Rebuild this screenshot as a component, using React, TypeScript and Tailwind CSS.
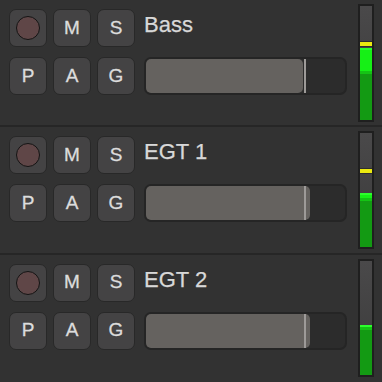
import React from "react";

type Track = {
  name: string;
  fill: number;
  peak: number | null;
  level: number;
};

const tracks: Track[] = [
  { name: "Bass", fill: 157, peak: 36, level: 42 },
  { name: "EGT 1", fill: 164, peak: 36, level: 60 },
  { name: "EGT 2", fill: 164, peak: null, level: 64 },
];

const font = { fontFamily: '"Liberation Sans", Arial, Helvetica, sans-serif' };

function Btn({ children }: { children: React.ReactNode }) {
  return (
    <div className="w-[38px] h-[38px] rounded-[7px] bg-[#444344] border border-[#282828] flex items-center justify-center text-[19px] text-[#dcdcdc] [-webkit-text-stroke:0.3px_#dcdcdc]">
      {children}
    </div>
  );
}

function Meter({ peak, level }: { peak: number | null; level: number }) {
  const threshold = 65;
  const innerH = 114;
  const brightH = Math.max(0, threshold - level);
  return (
    <div className="mt-[4px] w-[16px] h-[118px] border-2 border-[#1f1f1f] bg-gradient-to-b from-[#4a494a] to-[#3a3a3a] relative">
      {peak !== null && (
        <div
          className="absolute left-0 right-0 h-[6px] border-y border-[#2e2e2e] bg-[#ecea10]"
          style={{ top: peak - 1 }}
        />
      )}
      <div
        className="absolute left-0 right-0 bottom-0 flex flex-col"
        style={{ height: innerH - level }}
      >
        <div className="h-[2px] bg-[#2cff2c] shrink-0" />
        {brightH > 2 && (
          <div className="bg-[#16f016] shrink-0" style={{ height: brightH - 2 }} />
        )}
        <div className="h-[3px] bg-[#14c414] shrink-0" />
        <div className="flex-1 bg-[#139a13]" />
      </div>
    </div>
  );
}

function Section({ t, last }: { t: Track; last: boolean }) {
  return (
    <div
      className={
        "h-[128px] flex flex-row items-start bg-[#323232] " +
        (last ? "h-[126px]" : "border-b-2 border-[#262626]")
      }
    >
      <div className="pt-[9px] pl-[9px] grid grid-cols-[38px_38px_38px] gap-x-[6px] gap-y-[10px]">
        <Btn>
          <div className="w-[24px] h-[24px] rounded-full bg-[#5f4647] border-[1.5px] border-[#141414]" />
        </Btn>
        <Btn>M</Btn>
        <Btn>S</Btn>
        <Btn>P</Btn>
        <Btn>A</Btn>
        <Btn>G</Btn>
      </div>
      <div className="pt-[9px] ml-[9px] flex flex-col w-[203px]">
        <div className="h-[38px] leading-[32px] text-[22px] text-[#d8d8d8] [-webkit-text-stroke:0.25px_#d8d8d8] mb-[10px]">
          {t.name}
        </div>
        <div className="relative h-[38px] w-[203px] rounded-[7px] border-2 border-[#252525] bg-[#2c2c2c]">
          <div
            className="absolute left-0 top-0 bottom-0 rounded-[5px] bg-[#65625f]"
            style={{ width: t.fill }}
          />
          <div className="absolute left-[158px] top-0 bottom-0 w-[2px] bg-[#9d9a98]" />
        </div>
      </div>
      <div className="ml-[11px]">
        <Meter peak={t.peak} level={t.level} />
      </div>
    </div>
  );
}

export default function App() {
  return (
    <div className="w-[382px] h-[382px] bg-[#323232] flex flex-col overflow-hidden" style={font}>
      {tracks.map((t, i) => (
        <Section key={t.name} t={t} last={i === tracks.length - 1} />
      ))}
    </div>
  );
}
